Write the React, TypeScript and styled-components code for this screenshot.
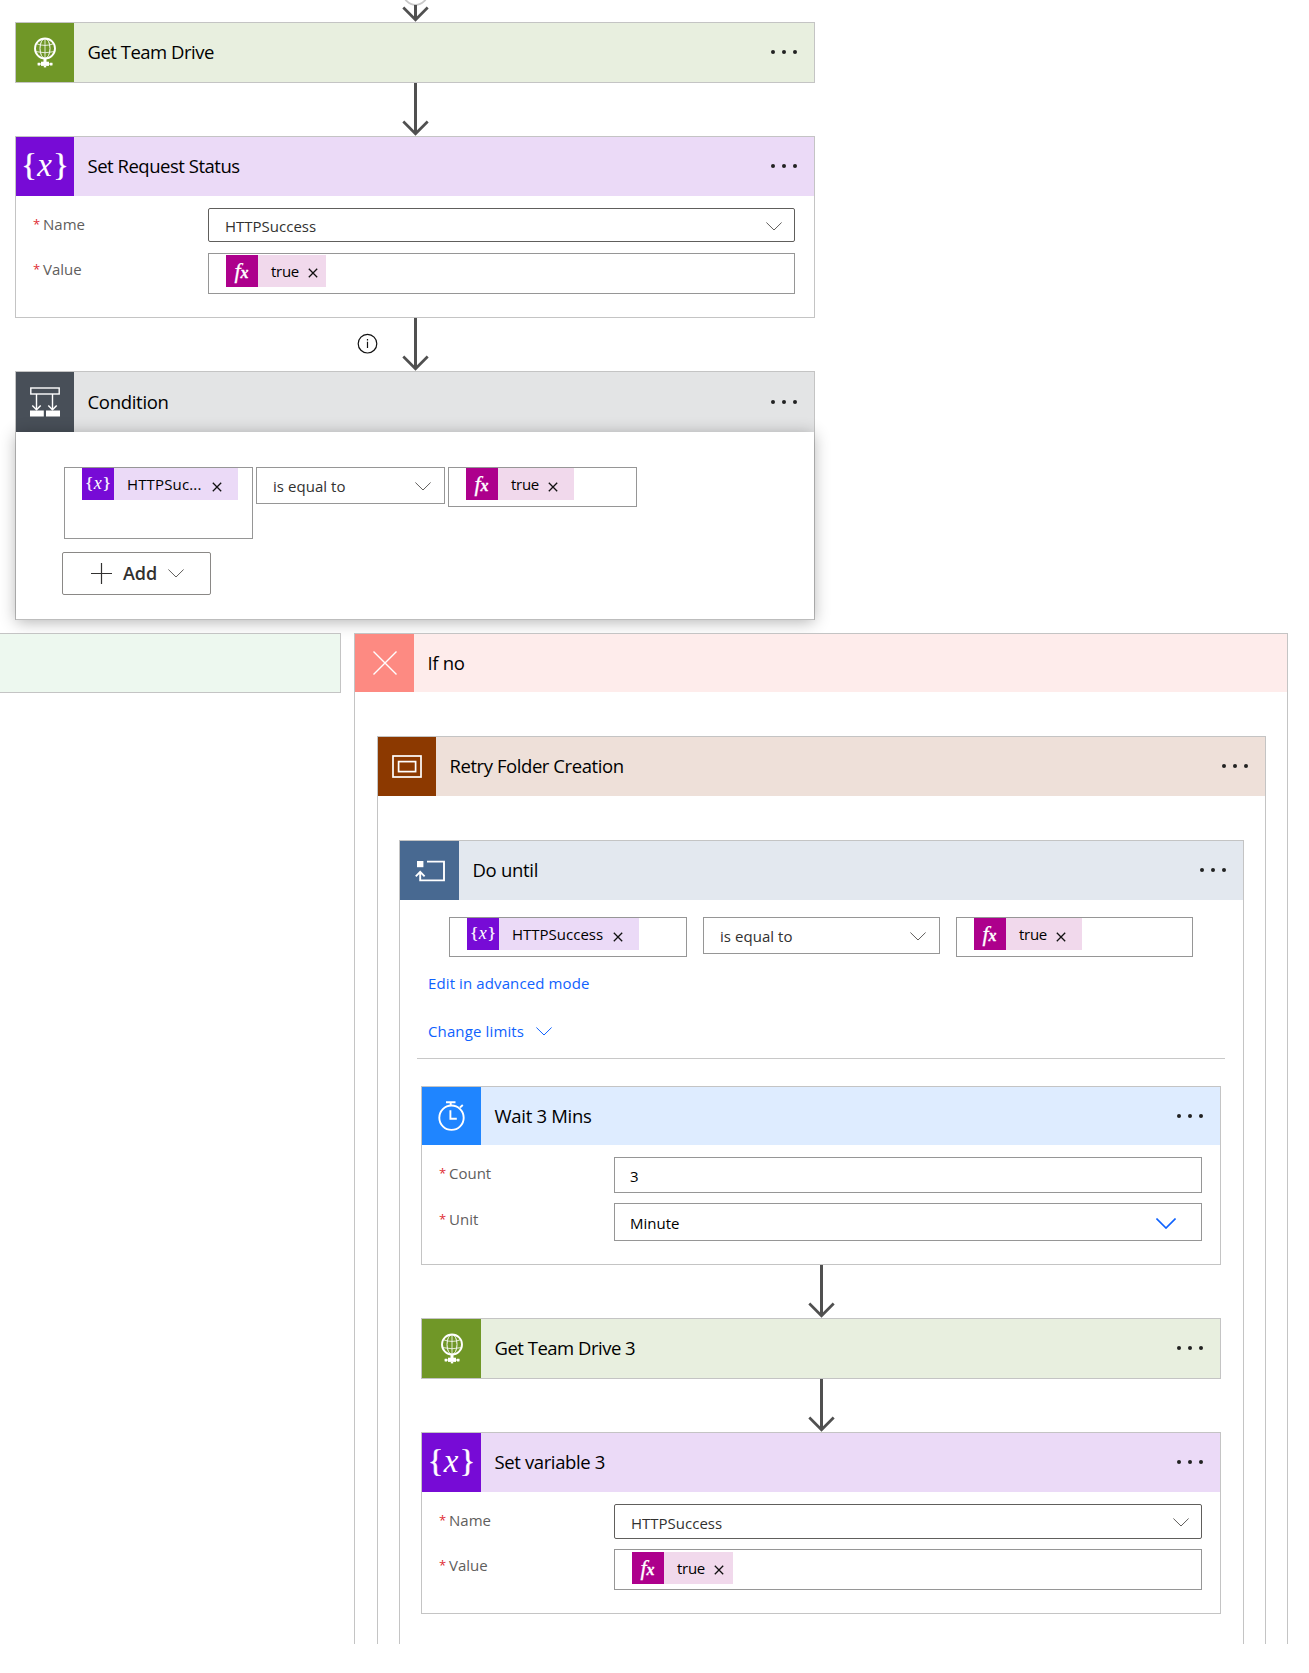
import React from "react";
import styled, { createGlobalStyle } from "styled-components";

const GlobalStyle = createGlobalStyle`
  * { box-sizing: border-box; }
  body { margin: 0; background: #fff; }
`;

const Canvas = styled.main`
  width: 1309px;
  height: 1644px;
  overflow: hidden;
  font-family: "Open Sans", "Noto Sans", sans-serif;
  font-size: 15px;
  color: #000;
`;

const Trunk = styled.div`
  width: 800px;
  margin-left: 15px;
`;

const Card = styled.section<{ $height?: number }>`
  display: flex;
  flex-direction: column;
  height: ${(p) => (p.$height ? `${p.$height}px` : "auto")};
  border: 1px solid #c4c4c4;
  background: #fff;
`;

const Header = styled.header<{ $bg: string; $height?: number }>`
  display: flex;
  flex: none;
  align-items: center;
  height: ${(p) => p.$height ?? 59}px;
  padding-right: 17px;
  background: ${(p) => p.$bg};
`;

const IconTile = styled.div<{ $bg: string; $width?: number }>`
  display: flex;
  align-items: center;
  justify-content: center;
  width: ${(p) => p.$width ?? 58}px;
  height: 100%;
  background: ${(p) => p.$bg};
  color: #fff;
  svg { display: block; }
`;

const Title = styled.h2<{ $spacing?: number; $lift?: number }>`
  flex: 1;
  margin: 0 0 0 13.5px;
  padding-bottom: ${(p) => p.$lift ?? 2}px;
  font-size: 18.5px;
  font-weight: 400;
  line-height: 26px;
  letter-spacing: ${(p) => p.$spacing ?? -0.3}px;
  white-space: nowrap;
`;

const MenuButton = styled.button`
  display: flex;
  gap: 7px;
  padding: 0 0 1px;
  border: 0;
  background: none;
`;

const Dot = styled.span`
  width: 4px;
  height: 4px;
  border-radius: 50%;
  background: #222;
`;

const Connector = styled.div<{ $height: number }>`
  display: grid;
  grid-template-columns: 1fr 28px 1fr;
  height: ${(p) => p.$height}px;
  padding-left: 1px;
  svg { display: block; }
`;

const InfoSlot = styled.div`
  justify-self: end;
  padding: 15px 24px 0 0;
`;

const Fields = styled.div<{ $pad?: number }>`
  display: flex;
  flex-direction: column;
  padding: 12px ${(p) => p.$pad ?? 18}px 0 18px;
`;

const FieldRow = styled.div<{ $gap?: number }>`
  display: flex;
  align-items: flex-start;
  margin-top: ${(p) => p.$gap ?? 0}px;
`;

const Label = styled.label<{ $width: number }>`
  display: flex;
  width: ${(p) => p.$width}px;
  padding-top: 6px;
  line-height: 21px;
  letter-spacing: 0;
  color: #5f5e5d;
`;

const Star = styled.span`
  width: 10px;
  margin-left: -1px;
  font-size: 13px;
  color: #e02b32;
`;

const Box = styled.div<{ $width?: number; $height: number; $dark?: boolean; $padLeft?: number; $padRight?: number; $color?: string; $alignTop?: number }>`
  display: flex;
  flex: ${(p) => (p.$width ? "none" : "1")};
  width: ${(p) => (p.$width ? `${p.$width}px` : "auto")};
  height: ${(p) => p.$height}px;
  align-items: ${(p) => (p.$alignTop === undefined ? "center" : "flex-start")};
  justify-content: space-between;
  padding: ${(p) => p.$alignTop ?? 0}px ${(p) => p.$padRight ?? 12}px 0 ${(p) => p.$padLeft ?? 17}px;
  border: 1px solid ${(p) => (p.$dark ? "#605e5c" : "#969696")};
  border-radius: ${(p) => (p.$dark ? 2 : 0)}px;
  background: #fff;
  color: ${(p) => p.$color ?? "#323130"};
  > svg { margin-top: 2px; }
`;

const Value = styled.span<{ $spacing?: number; $drop?: number }>`
  padding-top: ${(p) => p.$drop ?? 2}px;
  line-height: 20px;
  letter-spacing: ${(p) => p.$spacing ?? 0}px;
  white-space: nowrap;
`;

const ChipBox = styled.span<{ $bg: string; $width: number }>`
  display: flex;
  align-items: center;
  width: ${(p) => p.$width}px;
  height: 32px;
  background: ${(p) => p.$bg};
  color: #000;
`;

const ChipIcon = styled.span<{ $bg: string }>`
  display: flex;
  align-items: center;
  justify-content: center;
  width: 32px;
  height: 32px;
  background: ${(p) => p.$bg};
`;

const ChipText = styled.span<{ $spacing?: number; $gap?: number }>`
  margin: 0 ${(p) => p.$gap ?? 9}px 0 13px;
  line-height: 20px;
  letter-spacing: ${(p) => p.$spacing ?? -0.3}px;
  white-space: nowrap;
`;

const CrossSlot = styled.span<{ $drop: number }>`
  display: flex;
  padding-top: ${(p) => p.$drop}px;
`;

const Formula = styled.span<{ $size: number }>`
  display: flex;
  align-items: center;
  padding-bottom: ${(p) => p.$size / 16}px;
  font-family: "Liberation Serif", serif;
  font-size: ${(p) => p.$size}px;
  line-height: 1;
  color: #fff;
`;

const Brace = styled.span`
  margin: 0 -0.06em;
  font-size: 0.98em;
  -webkit-text-stroke: 0.014em #fff;
`;

const Italic = styled.em`
  padding: 0 0.1em 0 0.07em;
`;

const Fx = styled.span`
  display: flex;
  align-items: baseline;
  padding: 0 1px 1px 0;
  font-family: "Liberation Serif", serif;
  font-size: 22px;
  font-style: italic;
  line-height: 1;
  color: #fff;
  -webkit-text-stroke: 0.3px #fff;
  b { font-size: 16px; }
`;

const ConditionBody = styled.div`
  position: relative;
  height: 188px;
  padding: 35px 0 0 48px;
  border-bottom: 1px solid #bdbdbd;
  background: #fff;
  box-shadow: 0 2px 15px rgba(0, 0, 0, 0.3);
`;

const ConditionCard = styled.section`
  height: 249px;
  border: 1px solid #c4c4c4;
  border-bottom: 0;
`;

const CompareRow = styled.div<{ $gap: number }>`
  display: flex;
  align-items: flex-start;
  gap: ${(p) => p.$gap}px;
`;

const AddButton = styled.button`
  display: flex;
  align-items: center;
  width: 149px;
  height: 43px;
  margin: 13px 0 0 -2px;
  padding: 0 26px 1px 28px;
  border: 1px solid #8a8886;
  border-radius: 2px;
  background: #fff;
  font: 600 18px "Open Sans", sans-serif;
  color: #323130;
`;

const AddText = styled.span`
  margin: 0 11px 0 11px;
  letter-spacing: -0.1px;
`;

const Branches = styled.div`
  position: relative;
  display: flex;
  gap: 13px;
  margin-top: 13px;
`;

const YesBranch = styled.section`
  width: 341px;
  height: 60px;
  border: 1px solid #c4c4c4;
  border-left: 0;
  background: #edf8ef;
`;

const Scope = styled.section<{ $height: number; $width: number }>`
  width: ${(p) => p.$width}px;
  height: ${(p) => p.$height}px;
  border: 1px solid #c4c4c4;
  border-bottom: 0;
  background: #fff;
`;

const ScopeBody = styled.div<{ $top: number; $side: number }>`
  padding: ${(p) => p.$top}px 0 0 ${(p) => p.$side}px;
`;

const UntilCondition = styled.div`
  padding: 17px 0 0 49px;
`;

const LinkRow = styled.a<{ $top: number; $spacing: number }>`
  display: flex;
  align-items: center;
  gap: 12px;
  height: 22px;
  margin: ${(p) => p.$top}px 0 0 28px;
  letter-spacing: ${(p) => p.$spacing}px;
  color: #0f62fe;
`;

const Divider = styled.hr`
  width: 808px;
  height: 1px;
  margin: 16px 0 27px 17px;
  border: 0;
  background: #c8c8c8;
`;

const Steps = styled.div`
  width: 800px;
  margin-left: 21px;
`;

const Chevron = ({ w = 16, color = "#605e5c", stroke = 1 }: { w?: number; color?: string; stroke?: number }) => (
  <svg width={w} height={w / 2 + 1} viewBox={`0 0 ${w} ${w / 2 + 1}`} fill="none" stroke={color} strokeWidth={stroke}>
    <path d={`M.4 .5 L${w / 2} ${w / 2} L${w - 0.4} .5`} />
  </svg>
);

const Cross = () => (
  <svg width="10" height="10" viewBox="0 0 10 10" stroke="#111" strokeWidth="1.3">
    <path d="M.8 .8 L9.2 9.2 M9.2 .8 L.8 9.2" />
  </svg>
);

const GlobeIcon = () => (
  <svg width="24" height="31" viewBox="0 0 24 31" fill="none" stroke="#fff">
    <circle cx="12" cy="11.5" r="10" strokeWidth="1.9" />
    <ellipse cx="12" cy="11.5" rx="5" ry="10" strokeWidth="1" />
    <path d="M2 14.5Q12 17 22 14.5M3.6 6.8Q12 10 20.4 6.8M12 21V1.5" strokeWidth="1" strokeOpacity=".8" />
    <path d="M12 22V25" strokeWidth="3" />
    <path d="M8 26.8H16" strokeWidth="4.2" />
    <path d="M4.7 27.2H7M17 27.2H19.4" strokeWidth="2.8" />
    <path d="M4.7 27H19.4" strokeWidth="1.2" />
    <path d="M12 29V30.4" strokeWidth="2.4" />
  </svg>
);

const ConditionIcon = () => (
  <svg width="30" height="30" viewBox="0 0 30 30" fill="none" stroke="#fff">
    <rect x=".8" y="1" width="28.4" height="6" strokeWidth="1.4" />
    <path d="M6.5 7V22.5M22.5 7V22.5" strokeWidth="1.4" />
    <path d="M2.3 18.5L6.5 22.8L10.7 18.5M18.3 18.5L22.5 22.8L26.7 18.5" strokeWidth="1.5" />
    <path d="M0 26.5H13.8M16 26.5H30" strokeWidth="6" />
  </svg>
);

const CloseIcon = () => (
  <svg width="24" height="24" viewBox="0 0 24 24" stroke="#fff" strokeWidth="1.4">
    <path d="M.5 .5L23.5 23.5M23.5 .5L.5 23.5" />
  </svg>
);

const ScopeIcon = () => (
  <svg width="30" height="23" viewBox="0 0 30 23" fill="none" stroke="#fff" strokeWidth="1.7">
    <rect x="1" y="1" width="28" height="21" />
    <rect x="6.6" y="6.6" width="17" height="10" />
  </svg>
);

const UntilIcon = () => (
  <svg width="30" height="22" viewBox="0 0 30 22" fill="none" stroke="#fff" strokeWidth="1.9">
    <rect x="2" y="1" width="6.4" height="6.2" fill="#fff" stroke="none" />
    <path d="M12 1.6H29V20.4H5.2V12.5M.8 16.3L5.2 11.8L9.6 16.3" />
  </svg>
);

const TimerIcon = () => (
  <svg width="28" height="30" viewBox="0 0 28 30" fill="none" stroke="#fff" strokeWidth="1.9">
    <circle cx="13.5" cy="16.7" r="12.2" />
    <path d="M8 1.2H17.5M12.7 1.2V4.6M22 6.5L24.8 4M12.4 9.3V17.8H18.8" />
  </svg>
);

const VariableIcon = ({ size }: { size: number }) => (
  <Formula $size={size}>
    <Brace>{"{"}</Brace>
    <Italic>x</Italic>
    <Brace>{"}"}</Brace>
  </Formula>
);

const Arrow = ({ height, from = 0 }: { height: number; from?: number }) => (
  <svg width="28" height={height} viewBox={`0 0 28 ${height}`} fill="none" stroke="#505050">
    {from > 0 && <circle cx="13.5" cy="-7.5" r="12.3" stroke="#c8c8c8" strokeWidth="1.8" />}
    <path d={`M13.5 ${from}V${height - 2}`} strokeWidth="3" />
    <path d={`M1.3 ${height - 14.5}L13.5 ${height - 2.2}L25.7 ${height - 14.5}`} strokeWidth="2.7" />
  </svg>
);

const InfoIcon = () => (
  <svg width="21" height="21" viewBox="0 0 21 21" fill="none" stroke="#111" strokeWidth="1.2">
    <circle cx="10.5" cy="10.7" r="9.3" />
    <path d="M10.5 8.8V15M10.5 6V7.4" />
  </svg>
);

const Down = ({ height, from, info }: { height: number; from?: number; info?: boolean }) => (
  <Connector $height={height}>
    {info ? <InfoSlot><InfoIcon /></InfoSlot> : <span />}
    <Arrow height={height} from={from} />
  </Connector>
);

const Menu = () => (
  <MenuButton aria-label="Menu">
    <Dot />
    <Dot />
    <Dot />
  </MenuButton>
);

const FxChip = ({ width, drop = 4 }: { width: number; drop?: number }) => (
  <ChipBox $bg="#f1d9ec" $width={width}>
    <ChipIcon $bg="#ad008c"><Fx>f<b>x</b></Fx></ChipIcon>
    <ChipText>true</ChipText>
    <CrossSlot $drop={drop}><Cross /></CrossSlot>
  </ChipBox>
);

const VariableChip = ({ width, text, spacing, gap }: { width: number; text: string; spacing: number; gap: number }) => (
  <ChipBox $bg="#ebdaf7" $width={width}>
    <ChipIcon $bg="#770bd6"><VariableIcon size={18} /></ChipIcon>
    <ChipText $spacing={spacing} $gap={gap}>{text}</ChipText>
    <CrossSlot $drop={6}><Cross /></CrossSlot>
  </ChipBox>
);

const HttpCard = ({ title, tile }: { title: string; tile?: number }) => (
  <Card $height={61}>
    <Header $bg="#e8efdf">
      <IconTile $bg="#709727" $width={tile}><GlobeIcon /></IconTile>
      <Title $spacing={-0.5}>{title}</Title>
      <Menu />
    </Header>
  </Card>
);

type VariableCardProps = {
  title: string;
  spacing: number;
  tile?: number;
  pad: number;
  selectHeight: number;
  gap: number;
  chipTop: number;
  chipWidth: number;
};

const VariableCard = ({ title, spacing, tile, pad, selectHeight, gap, chipTop, chipWidth }: VariableCardProps) => (
  <Card $height={182}>
    <Header $bg="#ebdaf7">
      <IconTile $bg="#770bd6" $width={tile}><VariableIcon size={33} /></IconTile>
      <Title $spacing={spacing}>{title}</Title>
      <Menu />
    </Header>
    <Fields $pad={pad}>
      <FieldRow>
        <Label $width={174}><Star>*</Star>Name</Label>
        <Box $height={selectHeight} $dark $padLeft={16}>
          <Value>HTTPSuccess</Value>
          <Chevron />
        </Box>
      </FieldRow>
      <FieldRow $gap={gap}>
        <Label $width={174}><Star>*</Star>Value</Label>
        <Box $height={41} $alignTop={chipTop}>
          <FxChip width={chipWidth} />
        </Box>
      </FieldRow>
    </Fields>
  </Card>
);

export default function App() {
  return (
    <>
      <GlobalStyle />
      <Canvas>
        <Trunk>
          <Down height={22} from={5} />
          <HttpCard title="Get Team Drive" />
          <Down height={53} />
          <VariableCard title="Set Request Status" spacing={-0.48} pad={19} selectHeight={34} gap={11} chipTop={1} chipWidth={100} />
          <Down height={53} info />
          <ConditionCard>
            <Header $bg="#e3e4e5" $height={60}>
              <IconTile $bg="#484f58"><ConditionIcon /></IconTile>
              <Title $lift={0}>Condition</Title>
              <Menu />
            </Header>
            <ConditionBody>
              <CompareRow $gap={3}>
                <Box $width={189} $height={72} $alignTop={0}><VariableChip width={156} text="HTTPSuc..." spacing={0.15} gap={10} /></Box>
                <Box $width={189} $height={37} $padLeft={16} $padRight={13}><Value $drop={0} $spacing={0.05}>is equal to</Value><Chevron /></Box>
                <Box $width={189} $height={40} $alignTop={0}><FxChip width={108} drop={6} /></Box>
              </CompareRow>
              <AddButton>
                <svg width="21" height="21" viewBox="0 0 21 21" stroke="#323130" strokeWidth="1.2">
                  <path d="M10.5 0V21M0 10.5H21" />
                </svg>
                <AddText>Add</AddText>
                <Chevron />
              </AddButton>
            </ConditionBody>
          </ConditionCard>
        </Trunk>

        <Branches>
          <YesBranch />
          <Scope $width={934} $height={1011}>
            <Header $bg="#feeceb" $height={58}>
              <IconTile $bg="#fd8a82" $width={59}><CloseIcon /></IconTile>
              <Title $lift={0}>If no</Title>
            </Header>
            <ScopeBody $top={44} $side={22}>
              <Scope $width={889} $height={908}>
                <Header $bg="#eee0d9">
                  <IconTile $bg="#8c3900"><ScopeIcon /></IconTile>
                  <Title $spacing={-0.43}>Retry Folder Creation</Title>
                  <Menu />
                </Header>
                <ScopeBody $top={44} $side={21}>
                  <Scope $width={845} $height={804}>
                    <Header $bg="#e3e8ef">
                      <IconTile $bg="#486991" $width={59}><UntilIcon /></IconTile>
                      <Title>Do until</Title>
                      <Menu />
                    </Header>
                    <UntilCondition>
                      <CompareRow $gap={16}>
                        <Box $width={238} $height={40} $alignTop={0}><VariableChip width={172} text="HTTPSuccess" spacing={0} gap={10} /></Box>
                        <Box $width={237} $height={37} $padLeft={16} $padRight={13}><Value $drop={0} $spacing={0.05}>is equal to</Value><Chevron /></Box>
                        <Box $width={237} $height={40} $alignTop={0}><FxChip width={108} drop={6} /></Box>
                      </CompareRow>
                    </UntilCondition>
                    <LinkRow $top={15} $spacing={0.11}>Edit in advanced mode</LinkRow>
                    <LinkRow $top={26} $spacing={0.13}>Change limits <Chevron color="#0f62fe" /></LinkRow>
                    <Divider />
                    <Steps>
                      <Card $height={179}>
                        <Header $bg="#deecff" $height={58}>
                          <IconTile $bg="#1f85ff" $width={59}><TimerIcon /></IconTile>
                          <Title $lift={0}>Wait 3 Mins</Title>
                          <Menu />
                        </Header>
                        <Fields>
                          <FieldRow>
                            <Label $width={174}><Star>*</Star>Count</Label>
                            <Box $height={36} $padLeft={15} $color="#000"><Value>3</Value></Box>
                          </FieldRow>
                          <FieldRow $gap={10}>
                            <Label $width={174}><Star>*</Star>Unit</Label>
                            <Box $height={38} $padLeft={15} $padRight={25} $color="#000">
                              <Value $drop={1}>Minute</Value>
                              <Chevron w={20} color="#0f62fe" stroke={1.7} />
                            </Box>
                          </FieldRow>
                        </Fields>
                      </Card>
                      <Down height={53} />
                      <HttpCard title="Get Team Drive 3" tile={59} />
                      <Down height={53} />
                      <VariableCard title="Set variable 3" spacing={-0.38} tile={59} pad={18} selectHeight={35} gap={10} chipTop={2} chipWidth={101} />
                    </Steps>
                  </Scope>
                </ScopeBody>
              </Scope>
            </ScopeBody>
          </Scope>
        </Branches>
      </Canvas>
    </>
  );
}
